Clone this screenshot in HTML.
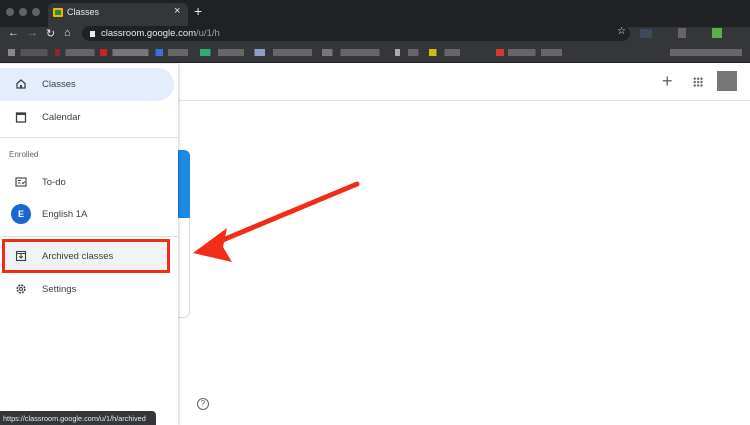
<!DOCTYPE html>
<html><head><style>
*{margin:0;padding:0;box-sizing:border-box}
body{width:750px;height:425px;overflow:hidden;background:#fff;font-family:"Liberation Sans",sans-serif;position:relative}
.a{position:absolute}
.it{position:absolute;left:0;width:174px;height:32px;font-size:9.5px;color:#3c4043;display:flex;align-items:center}
.it span{position:absolute;left:42px}
.ic{position:absolute;left:15px;width:12px;height:12px}
</style></head><body>
<div class="a" style="left:0;top:0;width:750px;height:27px;background:#202124"></div>
<div class="a" style="left:6px;top:8px;width:8px;height:8px;border-radius:50%;background:#5f6368"></div>
<div class="a" style="left:19px;top:8px;width:8px;height:8px;border-radius:50%;background:#5f6368"></div>
<div class="a" style="left:32px;top:8px;width:8px;height:8px;border-radius:50%;background:#5f6368"></div>
<div class="a" style="left:48px;top:3px;width:140px;height:24px;background:#35363a;border-radius:6px 6px 0 0"></div>
<div class="a" style="left:53px;top:8px;width:10px;height:9px;background:#f5b400;border-radius:1px"><div style="margin:2px;width:6px;height:5px;background:#1e8e3e"></div></div>
<div class="a" style="left:67px;top:7px;font-size:9px;color:#e8eaed">Classes</div>
<div class="a" style="left:174px;top:5px;font-size:11px;color:#e8eaed">×</div>
<div class="a" style="left:194px;top:3px;font-size:14px;color:#e8eaed">+</div>
<div class="a" style="left:0;top:27px;width:750px;height:18px;background:#35363a"></div>
<div class="a" style="left:8px;top:27px;font-size:11px;color:#e8eaed">←</div>
<div class="a" style="left:27px;top:27px;font-size:11px;color:#80868b">→</div>
<div class="a" style="left:46px;top:27px;font-size:11px;color:#e8eaed">↻</div>
<div class="a" style="left:64px;top:27px;font-size:11px;color:#e8eaed">⌂</div>
<div class="a" style="left:82px;top:26px;width:548px;height:15px;background:#202124;border-radius:8px"></div>
<div class="a" style="left:90px;top:29px;width:5px;height:6px;background:#e8eaed;margin-top:2px"></div>
<div class="a" style="left:101px;top:28px;font-size:9.5px;color:#e8eaed">classroom.google.com<span style="color:#9aa0a6">/u/1/h</span></div>
<div class="a" style="left:617px;top:26px;font-size:10px;color:#e8eaed">☆</div>
<div class="a" style="left:640px;top:29px;width:12px;height:9px;background:#3c4a5c"></div>
<div class="a" style="left:678px;top:28px;width:8px;height:10px;background:#666"></div>
<div class="a" style="left:712px;top:28px;width:10px;height:10px;background:#5bb045"></div>
<div class="a" style="left:0;top:45px;width:750px;height:18px;background:#35363a;border-bottom:1px solid #202124"></div>
<div class="a" style="left:8px;top:49px;width:180px;height:7px;background:linear-gradient(90deg,#888 0 4%,transparent 4% 7%,#555 7% 22%,transparent 22% 26%,#8a2b2b 26% 29%,transparent 29% 32%,#666 32% 48%,transparent 48% 51%,#c22 51% 55%,transparent 55% 58%,#777 58% 78%,transparent 78% 82%,#3a6fd8 82% 86%,transparent 86% 89%,#666 89% 100%)"></div>
<div class="a" style="left:200px;top:49px;width:260px;height:7px;background:linear-gradient(90deg,#3a7 0 4%,transparent 4% 7%,#666 7% 17%,transparent 17% 21%,#8fa0c8 21% 25%,transparent 25% 28%,#666 28% 43%,transparent 43% 47%,#777 47% 51%,transparent 51% 54%,#666 54% 69%,transparent 69% 75%,#aaa 75% 77%,transparent 77% 80%,#666 80% 84%,transparent 84% 88%,#ccc000 88% 91%,transparent 91% 94%,#666 94% 100%)"></div>
<div class="a" style="left:496px;top:49px;width:66px;height:7px;background:linear-gradient(90deg,#d33 0 12%,transparent 12% 18%,#666 18% 60%,transparent 60% 68%,#666 68% 100%)"></div>
<div class="a" style="left:670px;top:49px;width:72px;height:7px;background:#666"></div>
<div class="a" style="left:178px;top:100px;width:572px;height:1px;background:#e0e0e0"></div>
<div class="a" style="left:662px;top:71px;font-size:18px;color:#5f6368">+</div>
<div class="a" style="left:693px;top:77px;width:10px;height:10px;background:radial-gradient(circle,#5f6368 1px,transparent 1.3px) 0 0/3.4px 3.4px"></div>
<div class="a" style="left:717px;top:71px;width:20px;height:20px;background:#777"></div>
<div class="a" style="left:170px;top:150px;width:20px;height:168px;border:1px solid #dadce0;border-radius:6px;background:#fff"></div>
<div class="a" style="left:170px;top:150px;width:20px;height:68px;background:#1e88e5;border-radius:6px 6px 0 0"></div>
<div class="a" style="left:197px;top:398px;width:12px;height:12px;border:1.3px solid #5f6368;border-radius:50%;font-size:8px;color:#5f6368;text-align:center;line-height:10px">?</div>
<div class="a" style="left:0;top:64px;width:178px;height:361px;background:#fff;box-shadow:1px 0 3px rgba(0,0,0,.2)"></div>
<div class="a" style="left:0;top:68px;width:174px;height:33px;background:#e3edfb;border-radius:0 17px 17px 0"></div>
<div class="it" style="top:68px"><svg class="ic" viewBox="0 0 12 12"><path d="M2 5.5L6 2l4 3.5V10H2z" fill="none" stroke="#3c4043" stroke-width="1.3"/><rect x="5" y="7" width="2" height="3" fill="#3c4043"/></svg><span>Classes</span></div>
<div class="it" style="top:101px"><svg class="ic" viewBox="0 0 12 12"><rect x="1.5" y="2" width="9" height="9" fill="none" stroke="#3c4043" stroke-width="1.3"/><rect x="1.5" y="2" width="9" height="2" fill="#3c4043"/></svg><span>Calendar</span></div>
<div class="a" style="left:0;top:137px;width:178px;height:1px;background:#e0e0e0"></div>
<div class="a" style="left:9px;top:150px;font-size:8px;color:#5f6368">Enrolled</div>
<div class="it" style="top:166px"><svg class="ic" viewBox="0 0 12 12"><rect x="1" y="2" width="10" height="8" fill="none" stroke="#3c4043" stroke-width="1.1"/><path d="M3 4.5h3M3 7h2.5M7 6.5l1 1 2-2" stroke="#3c4043" stroke-width="1" fill="none"/></svg><span>To-do</span></div>
<div class="it" style="top:198px"><div class="a" style="left:11px;top:6px;width:20px;height:20px;border-radius:50%;background:#1967d2;color:#fff;font-size:9px;font-weight:bold;text-align:center;line-height:20px">E</div><span>English 1A</span></div>
<div class="a" style="left:0;top:236px;width:178px;height:1px;background:#e0e0e0"></div>
<div class="a" style="left:2px;top:239px;width:168px;height:34px;background:#f1f3f4;border:3px solid #f12d17"></div>
<div class="it" style="top:240px"><svg class="ic" viewBox="0 0 12 12"><rect x="1.5" y="1.5" width="9" height="9" fill="none" stroke="#3c4043" stroke-width="1.1"/><path d="M6 4v4M4.2 6.3L6 8l1.8-1.7M1.5 3.5h9" stroke="#3c4043" stroke-width="1" fill="none"/></svg><span>Archived classes</span></div>
<div class="it" style="top:273px"><svg class="ic" viewBox="0 0 12 12"><circle cx="6" cy="6" r="3.8" fill="none" stroke="#3c4043" stroke-width="1.6" stroke-dasharray="2 1"/><circle cx="6" cy="6" r="1.5" fill="none" stroke="#3c4043"/></svg><span>Settings</span></div>
<div class="a" style="left:0;top:411px;width:156px;height:14px;background:#35363a;border-radius:0 4px 0 0;font-size:7.3px;color:#e8eaed;padding:3px 0 0 3px;white-space:nowrap;overflow:hidden">https://classroom.google.com/u/1/h/archived</div>
<svg class="a" style="left:0;top:0" width="750" height="425"><path d="M357 184L218 242" stroke="#f12d17" stroke-width="5" stroke-linecap="round"/><polygon points="193,253 227,228 223,247 232,262" fill="#f12d17"/></svg>
</body></html>
